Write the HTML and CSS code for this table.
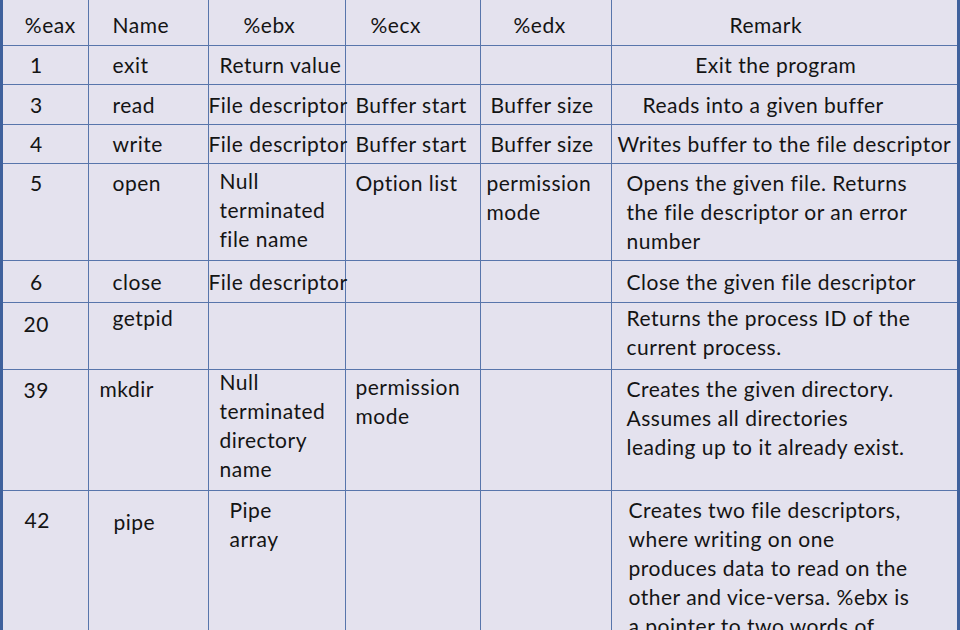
FILE: index.html
```html
<!DOCTYPE html>
<html>
<head>
<meta charset="utf-8">
<link rel="stylesheet" href="styles.css">
</head>
<body>
<div class="frame">
<table class="sys">
<colgroup>
<col class="c1"><col class="c2"><col class="c3"><col class="c4"><col class="c5"><col class="c6">
</colgroup>
<tr class="r-head">
<td class="eax">%eax</td><td class="nm">Name</td><td class="hb">%ebx</td><td class="hc">%ecx</td><td class="hd">%edx</td><td class="hr">Remark</td>
</tr>
<tr class="r-1">
<td class="eax">1</td><td class="nm">exit</td><td class="b">Return value</td><td></td><td></td><td class="rm-c">Exit the program</td>
</tr>
<tr class="r-3">
<td class="eax">3</td><td class="nm">read</td><td class="b tight">File descriptor</td><td class="c">Buffer start</td><td class="d">Buffer size</td><td class="rm-read">Reads into a given buffer</td>
</tr>
<tr class="r-4">
<td class="eax">4</td><td class="nm">write</td><td class="b tight">File descriptor</td><td class="c">Buffer start</td><td class="d">Buffer size</td><td class="rm-write">Writes buffer to the file descriptor</td>
</tr>
<tr class="r-5 top">
<td class="eax">5</td><td class="nm">open</td><td class="b">Null<br>terminated<br>file name</td><td class="c">Option list</td><td class="d2">permission<br>mode</td><td class="rm">Opens the given file. Returns<br>the file descriptor or an error<br>number</td>
</tr>
<tr class="r-6">
<td class="eax">6</td><td class="nm">close</td><td class="b tight">File descriptor</td><td></td><td></td><td class="rm">Close the given file descriptor</td>
</tr>
<tr class="r-20 top">
<td class="eax num20">20</td><td class="nm">getpid</td><td></td><td></td><td></td><td class="rm">Returns the process ID of the<br>current process.</td>
</tr>
<tr class="r-39 top">
<td class="eax num39">39</td><td class="nm mk">mkdir</td><td class="b"><div class="lift">Null<br>terminated<br>directory<br>name</div></td><td class="c p39">permission<br>mode</td><td></td><td class="rm p39r">Creates the given directory.<br>Assumes all directories<br>leading up to it already exist.</td>
</tr>
<tr class="r-42 top">
<td class="eax num42">42</td><td class="nm pp">pipe</td><td class="b pipe">Pipe<br>array</td><td></td><td></td><td class="rm rm42">Creates two file descriptors,<br>where writing on one<br>produces data to read on the<br>other and vice-versa. %ebx is<br>a pointer to two words of</td>
</tr>
</table>
</div>
</body>
</html>
```

FILE: styles.css
```css
html, body {
  margin: 0;
  padding: 0;
  width: 960px;
  height: 630px;
  overflow: hidden;
  background: #e4e2ee;
}

.frame {
  width: 954px;
  height: 630px;
  border-left: 3px solid #3f619c;
  border-right: 3px solid #3f619c;
  overflow: hidden;
  background: #e4e2ee;
}

.sys {
  border-collapse: collapse;
  table-layout: fixed;
  width: 955px;
  font-family: "Lato", "Liberation Sans", sans-serif;
  font-size: 21px;
  letter-spacing: 0.5px;
  line-height: 29px;
  color: #141414;
}

.c1 { width: 85px; }
.c2 { width: 120px; }
.c3 { width: 137px; }
.c4 { width: 135px; }
.c5 { width: 131px; }
.c6 { width: 347px; }

.sys td {
  border: 1px solid #5875ab;
  padding: 0;
  vertical-align: middle;
  white-space: nowrap;
  overflow: visible;
}

.sys tr:first-child td { border-top: none; }
.sys td:first-child { border-left: none; }
.sys td:last-child { border-right: none; }

.r-head { height: 45px; }
.r-head td { padding-top: 5px; }
.r-1 { height: 39px; }
.r-3 { height: 40px; }
.r-4 { height: 39px; }
.r-5 { height: 97px; }
.r-6 { height: 42px; }
.r-20 { height: 67px; }
.r-39 { height: 121px; }
.r-42 { height: 200px; }

.top td { vertical-align: top; padding-top: 4px; }

.eax { text-align: center; padding-right: 18px !important; }
.r-head .eax { padding-right: 0 !important; padding-left: 10px !important; }
.num20 { padding-top: 6px !important; }
.num39 { padding-top: 5px !important; }
.num42 { padding-top: 14px !important; padding-right: 16px !important; }

.nm { padding-left: 24px !important; }
.nm.mk { padding-left: 11px !important; padding-top: 4px !important; }
.nm.pp { padding-left: 25px !important; padding-top: 16px !important; }
.r-20 .nm { padding-top: 0 !important; }

.hb { padding-left: 35px !important; }
.hc { padding-left: 25px !important; }
.hd { padding-left: 33px !important; }
.hr { padding-left: 118px !important; }

.b { padding-left: 11px !important; }
.b.tight { padding-left: 0 !important; }
.b.pipe { padding-left: 21px !important; }
.r-5 .b { padding-top: 2px !important; }
.r-39 .b { padding-top: 0 !important; }
.lift { margin-top: -3px; }

.c { padding-left: 10px !important; }
.c.p39 { padding-top: 2px !important; }
.d { padding-left: 10px !important; }
.d2 { padding-left: 6px !important; }

.rm { padding-left: 15px !important; }
.r-20 .rm { padding-top: 0 !important; }
.rm.p39r { padding-top: 4px !important; }
.rm.rm42 { padding-left: 17px !important; padding-top: 4px !important; }
.rm-c { text-align: center; padding-right: 18px !important; }
.rm-read { padding-left: 31px !important; }
.rm-write { padding-left: 6px !important; }
```
